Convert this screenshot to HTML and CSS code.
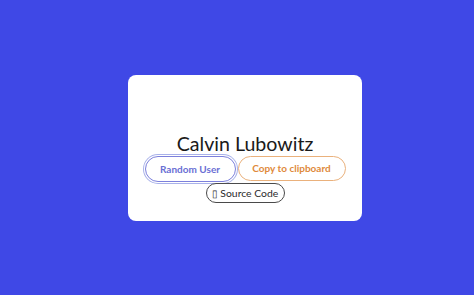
FILE: index.html
```html
<!DOCTYPE html>
<html>
<head>
<meta charset="utf-8">
<link rel="stylesheet" href="styles.css">
</head>
<body>
<div class="page">
  <div class="card">
    <h1 class="name">Calvin Lubowitz</h1>
    <div class="actions">
      <button class="btn btn-random">Random User</button>
      <button class="btn btn-copy">Copy to clipboard</button>
    </div>
    <button class="btn btn-source">&#x25AF; Source Code</button>
  </div>
</div>
</body>
</html>
```
FILE: styles.css
```css
html, body {
  margin: 0;
  padding: 0;
  height: 100%;
}
body {
  background: #3f48e6;
  font-family: "Lato", "Noto Sans", sans-serif;
}
.page {
  height: 100%;
  display: flex;
  align-items: center;
  justify-content: center;
  padding-left: 16px;
  box-sizing: border-box;
}
.card {
  width: 234px;
  height: 146px;
  box-sizing: border-box;
  background: #fff;
  border-radius: 8px;
  display: flex;
  flex-direction: column;
  align-items: center;
  padding-top: 56px;
}
.name {
  margin: 0;
  font-weight: 400;
  font-size: 19.6px;
  line-height: 26px;
  color: #1a1a1a;
}
.actions {
  display: flex;
  gap: 2px;
  margin-top: -1px;
}
.btn {
  font-family: "Lato", "Noto Sans", sans-serif;
  background: #fff;
  border-radius: 14px;
  font-size: 10px;
  font-weight: 700;
  padding: 0;
  white-space: nowrap;
  cursor: pointer;
}
.btn-random {
  width: 91px;
  height: 26px;
  color: #6a6fd4;
  border: 1px solid #7c80dc;
  box-shadow: 0 0 0 1px #fff, 0 0 0 2px #a9b2ea;
}
.btn-copy {
  width: 108px;
  height: 25px;
  color: #e08a3c;
  border: 1px solid #eab17c;
}
.btn-source {
  margin-top: 1px;
  width: 79px;
  height: 20px;
  font-weight: 400;
  font-size: 10.4px;
  color: #2a2a2a;
  border: 1px solid #4a4a4a;
  border-radius: 11px;
}
```
